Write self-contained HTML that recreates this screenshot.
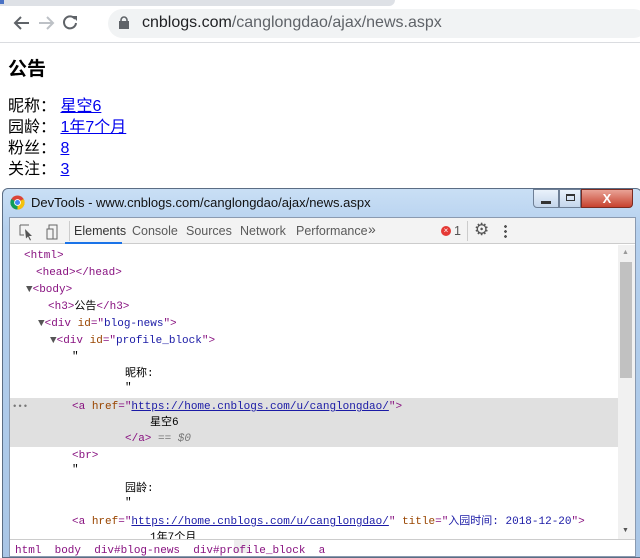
<!DOCTYPE html>
<html><head><meta charset="utf-8"><style>
*{margin:0;padding:0;box-sizing:border-box}
body{width:640px;height:553px;overflow:hidden;background:#fff;font-family:"Liberation Sans","Noto Sans CJK SC",sans-serif;position:relative}
.abs{position:absolute}
.m{font-family:"Liberation Mono","Noto Sans CJK SC",monospace;font-size:11px;white-space:pre;position:absolute;line-height:14px}
.tg{color:#881280}.at{color:#994500}.av{color:#1a1aa6}.ln{color:#1a1aa6;text-decoration:underline}
a{color:#00e;text-decoration:underline}
.tab{position:absolute;top:224px;font-size:12.5px;color:#5a5a5a}
</style></head><body>
<div class="abs" style="left:0;top:0;width:395px;height:6px;background:#dee1e6;border-radius:0 0 6px 0"></div>
<div class="abs" style="left:0;top:0;width:4px;height:4px;background:#4a72c4"></div>
<svg class="abs" style="left:10px;top:13px" width="100" height="20" viewBox="0 0 100 20">
<path d="M19 10H5M11 4L5 10L11 16" stroke="#5f6368" stroke-width="2" fill="none"/>
<path d="M29 10H43M37 4L43 10L37 16" stroke="#bdc1c6" stroke-width="2" fill="none"/>
<path d="M65 6A6 6 0 1 0 66 10" stroke="#5f6368" stroke-width="2" fill="none"/><path d="M62 3L67 3L67 8Z" fill="#5f6368"/>
</svg>
<div class="abs" style="left:108px;top:9px;width:540px;height:29px;background:#f1f3f4;border-radius:15px"></div>
<svg class="abs" style="left:119px;top:16px" width="10" height="13"><rect x="0" y="5" width="10" height="8" fill="#5f6368"/><path d="M2 6V4a3 3 0 0 1 6 0v2" stroke="#5f6368" stroke-width="1.6" fill="none"/></svg>
<div class="abs" style="left:142px;top:14px;font-size:16px;color:#202124">cnblogs.com<span style="color:#5f6368">/canglongdao/ajax/news.aspx</span></div>
<div class="abs" style="left:0;top:42px;width:640px;height:1px;background:#dadce0"></div>
<div class="abs" style="left:8px;top:54px;font-size:19px;font-weight:bold">公告</div>
<div class="abs" style="left:8px;top:96px;font-size:16px;line-height:21px">昵称： <a>星空6</a><br>园龄： <a>1年7个月</a><br>粉丝： <a>8</a><br>关注： <a>3</a></div>
<div class="abs" style="left:2px;top:188px;width:640px;height:370px;background:linear-gradient(#c9dff5,#b5d0ee 40px,#a9c6e6);border:1px solid #5b6d84;border-radius:6px 6px 0 0"></div>
<svg class="abs" style="left:10px;top:195px" width="15" height="15" viewBox="0 0 16 16"><circle cx="8" cy="8" r="7.5" fill="#db4437"/><path d="M8 8L14.5 4.2A7.5 7.5 0 0 1 8 15.5Z" fill="#f4c20d"/><path d="M8 8L8 15.5A7.5 7.5 0 0 1 1.5 4.2Z" fill="#0f9d58"/><circle cx="8" cy="8" r="3.6" fill="#fff"/><circle cx="8" cy="8" r="2.7" fill="#4285f4"/></svg>
<div class="abs" style="left:31px;top:195px;font-size:13px;color:#111">DevTools - www.cnblogs.com/canglongdao/ajax/news.aspx</div>
<div class="abs" style="left:533px;top:189px;width:26px;height:19px;border:1px solid #6e7f96;background:linear-gradient(#eaf2fb,#c4d6ec);border-radius:0 0 0 4px"></div>
<div class="abs" style="left:541px;top:201px;width:10px;height:3px;background:#333"></div>
<div class="abs" style="left:559px;top:189px;width:22px;height:19px;border:1px solid #6e7f96;background:linear-gradient(#eaf2fb,#c4d6ec)"></div>
<div class="abs" style="left:566px;top:194px;width:9px;height:7px;border:1px solid #333;border-top-width:2px"></div>
<div class="abs" style="left:581px;top:189px;width:52px;height:19px;border:1px solid #7a2b22;background:linear-gradient(#e9a396,#c7422f);border-radius:0 0 4px 0;color:#fff;font-weight:bold;font-size:13px;text-align:center;line-height:17px">X</div>
<div class="abs" style="left:9px;top:217px;width:627px;height:340px;background:#fff;border:1px solid #8a9ab0"></div>
<div class="abs" style="left:10px;top:218px;width:625px;height:26px;background:#f3f3f3;border-bottom:1px solid #ccc"></div>
<svg class="abs" style="left:18px;top:223px" width="46" height="18"><path d="M2 2h9M2 2v10h4" stroke="#666" fill="none"/><path d="M7 6l7 7-3 0 2 4-1 .5-2-4-2 2z" fill="#555"/><rect x="29" y="6" width="6" height="10" stroke="#666" fill="none"/><path d="M31 6V2h8v14h-4" stroke="#666" fill="none"/></svg>
<div class="abs" style="left:69px;top:221px;width:1px;height:20px;background:#ccc"></div>
<div class="abs" style="left:65px;top:242px;width:57px;height:2px;background:#1a73e8"></div>
<div class="tab" style="left:74px;color:#333">Elements</div>
<div class="tab" style="left:132px">Console</div>
<div class="tab" style="left:186px">Sources</div>
<div class="tab" style="left:240px">Network</div>
<div class="tab" style="left:296px">Performance</div>
<div class="abs" style="top:221px;left:368px;font-size:14px;color:#555">»</div>
<div class="abs" style="left:441px;top:226px;width:10px;height:10px;border-radius:50%;background:#e53935;color:#fff;font-size:8px;text-align:center;line-height:10px">×</div>
<div class="abs" style="left:454px;top:224px;font-size:12.5px;color:#555">1</div>
<div class="abs" style="left:467px;top:221px;width:1px;height:20px;background:#ccc"></div>
<div class="abs" style="left:474px;top:220px;font-size:17px;color:#555">⚙</div>
<div class="abs" style="left:504px;top:224px;width:3px;height:14px;background:radial-gradient(circle,#555 1.3px,transparent 1.5px) 0 0/3px 5px"></div>
<div class="abs" style="left:10px;top:398px;width:609px;height:49px;background:#e0e0e0"></div>
<div class="m" style="left:12px;top:400px;color:#777;font-size:9px">•••</div>
<div class="m" style="left:24px;top:249px"><span class="tg">&lt;html&gt;</span></div>
<div class="m" style="left:36px;top:266px"><span class="tg">&lt;head&gt;&lt;/head&gt;</span></div>
<div class="m" style="left:26px;top:283px;color:#555">▼<span class="tg">&lt;body&gt;</span></div>
<div class="m" style="left:48px;top:300px"><span class="tg">&lt;h3&gt;</span>公告<span class="tg">&lt;/h3&gt;</span></div>
<div class="m" style="left:38px;top:317px;color:#555">▼<span class="tg">&lt;div </span><span class="at">id</span><span class="tg">="</span><span class="av">blog-news</span><span class="tg">"&gt;</span></div>
<div class="m" style="left:50px;top:334px;color:#555">▼<span class="tg">&lt;div </span><span class="at">id</span><span class="tg">="</span><span class="av">profile_block</span><span class="tg">"&gt;</span></div>
<div class="m" style="left:72px;top:350px">"</div>
<div class="m" style="left:125px;top:367px">昵称:</div>
<div class="m" style="left:125px;top:381px">"</div>
<div class="m" style="left:72px;top:400px"><span class="tg">&lt;a </span><span class="at">href</span><span class="tg">="</span><span class="ln">https://home.cnblogs.com/u/canglongdao/</span><span class="tg">"&gt;</span></div>
<div class="m" style="left:150px;top:416px">星空6</div>
<div class="m" style="left:125px;top:432px"><span class="tg">&lt;/a&gt;</span><span style="color:#777;font-style:italic"> == $0</span></div>
<div class="m" style="left:72px;top:449px"><span class="tg">&lt;br&gt;</span></div>
<div class="m" style="left:72px;top:463px">"</div>
<div class="m" style="left:125px;top:482px">园龄:</div>
<div class="m" style="left:125px;top:496px">"</div>
<div class="m" style="left:72px;top:515px"><span class="tg">&lt;a </span><span class="at">href</span><span class="tg">="</span><span class="ln">https://home.cnblogs.com/u/canglongdao/</span><span class="tg">" </span><span class="at">title</span><span class="tg">="</span><span class="av">入园时间: 2018-12-20</span><span class="tg">"&gt;</span></div>
<div class="m" style="left:150px;top:531px">1年7个月</div>
<div class="abs" style="left:618px;top:245px;width:17px;height:295px;background:#f1f1f1"></div>
<div class="abs" style="left:620px;top:262px;width:12px;height:116px;background:#c1c1c1"></div>
<div class="abs" style="left:622px;top:249px;font-size:7px;color:#999">▲</div>
<div class="abs" style="left:622px;top:527px;font-size:7px;color:#555">▼</div>
<div class="abs" style="left:10px;top:539px;width:625px;height:14px;background:#fff;border-top:1px solid #ccc"></div>
<div class="abs" style="left:234px;top:540px;width:16px;height:13px;background:#eee"></div>
<div class="m" style="left:15px;top:544px;color:#881280">html  body  div#blog-news  div#profile_block  a</div>
</body></html>
